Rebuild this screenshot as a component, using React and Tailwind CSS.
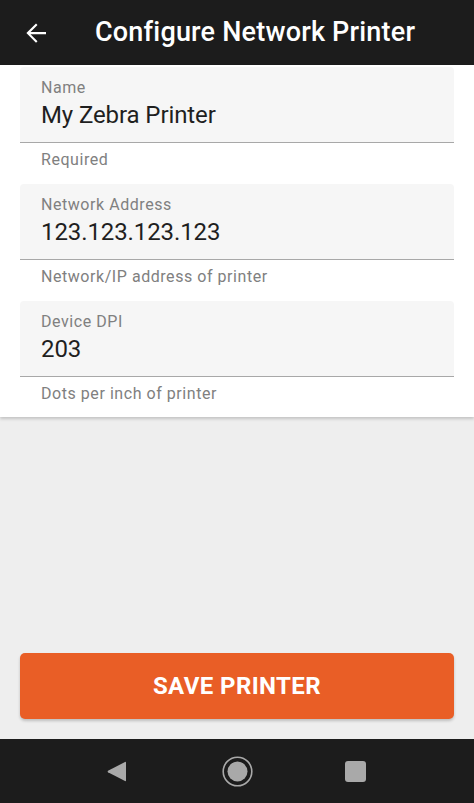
import React from "react";

const fields = [
  { label: "Name", value: "My Zebra Printer", helper: "Required" },
  { label: "Network Address", value: "123.123.123.123", helper: "Network/IP address of printer" },
  { label: "Device DPI", value: "203", helper: "Dots per inch of printer" },
];

const Field = ({ label, value, helper, last }) => (
  <div className={last ? "pb-[14px]" : "pb-[15px]"}>
    <div className="h-[76px] bg-[#f6f6f6] rounded-t-[4px] px-[21px] pt-[11px] border-b border-[#a8a8a8]">
      <p className="text-[16px] leading-[19px] text-[#808080] tracking-[0.55px]">{label}</p>
      <p className="mt-[4px] text-[24px] leading-[28px] text-[#1f1f1f] tracking-[-0.1px]">{value}</p>
    </div>
    <p className="pt-[7px] px-[21px] text-[16px] leading-[19px] text-[#808080] tracking-[0.55px]">
      {helper}
    </p>
  </div>
);

const App = () => {
  return (
    <div className="flex flex-col h-[803px] w-full bg-[#eeeeee] font-['Roboto','Liberation_Sans',sans-serif]">
      <div className="flex items-center h-[65px] bg-[#1c1c1c] shrink-0">
        <div className="flex items-center justify-center w-[72px] h-full">
          <svg width="30" height="30" viewBox="0 0 24 24" fill="#ffffff">
            <path d="M20 11.1H7.6l5.6-5.6L12 4.3 4.3 12l7.7 7.7 1.2-1.2-5.6-5.6H20z" />
          </svg>
        </div>
        <h1 className="ml-[23px] text-[27px] font-medium text-white tracking-[0.2px]">
          Configure Network Printer
        </h1>
      </div>

      <div className="bg-white px-[20px] pt-[2px] shadow-[0_2px_3px_rgba(0,0,0,0.18)] relative">
        {fields.map((f, i) => (
          <Field key={f.label} {...f} last={i === fields.length - 1} />
        ))}
      </div>

      <div className="flex-1 flex flex-col justify-end px-[20px] pb-[20px]">
        <button className="h-[66px] w-full rounded-[5px] bg-[#e95e26] text-white text-[24px] font-bold tracking-[0.4px] shadow-[0_2px_3px_rgba(0,0,0,0.2)]">
          SAVE PRINTER
        </button>
      </div>

      <div className="flex items-center h-[64px] bg-[#1c1c1c] shrink-0">
        <div className="w-[127px] flex justify-end">
          <svg width="20" height="21" viewBox="0 0 20 21">
            <path d="M19 1.5 L19 19.5 Q19 20.5 18 20 L1 11.3 Q0.3 10.5 1 9.7 L18 1 Q19 0.5 19 1.5 Z" fill="#a9a9a9" />
          </svg>
        </div>
        <div className="w-[95px]" />
        <svg width="31" height="31" viewBox="0 0 31 31">
          <circle cx="15.5" cy="15.5" r="14.3" fill="none" stroke="#a9a9a9" strokeWidth="1.6" />
          <circle cx="15.5" cy="15.5" r="10" fill="#a9a9a9" />
        </svg>
        <div className="w-[92px]" />
        <div className="w-[21px] h-[21px] rounded-[3px] bg-[#a9a9a9]" />
      </div>
    </div>
  );
};

export default App;
